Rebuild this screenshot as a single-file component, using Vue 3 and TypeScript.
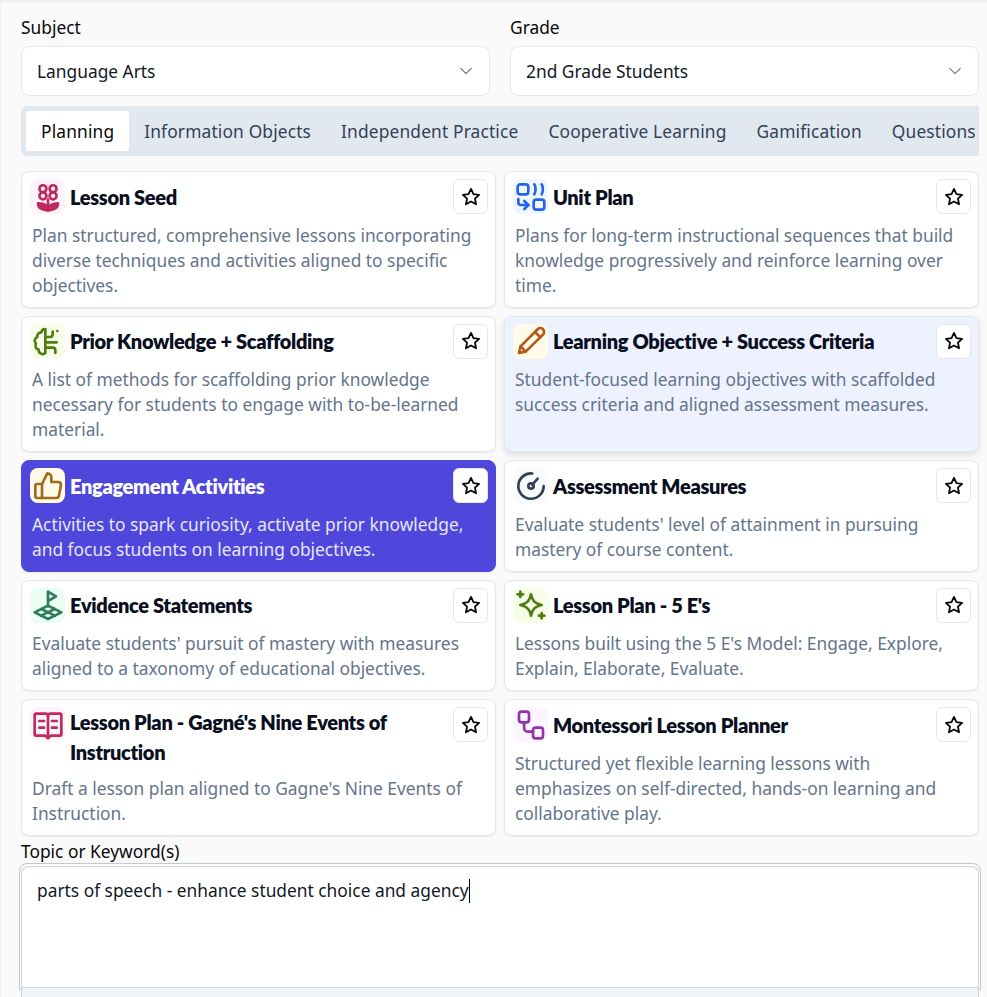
<template>
  <div class="page">
    <div class="top-row">
      <div class="field">
        <label class="label">Subject</label>
        <div class="select">
          <span>Language Arts</span>
          <svg class="chev" viewBox="0 0 24 24" fill="none" stroke="currentColor" stroke-width="1.5"><path d="M5 8.500l7 7 7-7" stroke-linecap="round" stroke-linejoin="round"/></svg>
        </div>
      </div>
      <div class="field">
        <label class="label">Grade</label>
        <div class="select">
          <span>2nd Grade Students</span>
          <svg class="chev" viewBox="0 0 24 24" fill="none" stroke="currentColor" stroke-width="1.5"><path d="M5 8.500l7 7 7-7" stroke-linecap="round" stroke-linejoin="round"/></svg>
        </div>
      </div>
    </div>

    <div class="tabs">
      <button v-for="(t, i) in tabs" :key="t" class="tab" :class="{ active: i === 0 }">{{ t }}</button>
    </div>

    <div class="grid">
      <div v-for="c in cards" :key="c.title" class="card" :class="c.state">
        <div class="card-head">
          <span class="icon" :class="c.icon">
            <svg viewBox="0 0 24 24" fill="none" stroke="currentColor" stroke-width="2" stroke-linecap="round" stroke-linejoin="round">
              <path v-for="d in icons[c.icon]" :key="d" :d="d" />
              <path v-for="d in solids[c.icon] || []" :key="d" :d="d" fill="currentColor" />
            </svg>
          </span>
          <h3 class="title">{{ c.title }}</h3>
          <button class="star">
            <svg viewBox="0 0 24 24" fill="none" stroke="currentColor" stroke-width="2" stroke-linejoin="round"><path d="M12 3.200l2.700 5.600 6.100.8-4.500 4.200 1.200 6.100-5.500-3-5.500 3 1.200-6.100-4.500-4.200 6.100-.8z"/></svg>
          </button>
        </div>
        <p class="desc">{{ c.desc }}</p>
      </div>
    </div>

    <label class="label topic-label">Topic or Keyword(s)</label>
    <div class="editor-ring">
      <div class="editor">
        <div class="editor-body"><span>parts of speech - enhance student choice and agency</span><i class="caret"></i></div>
        <div class="editor-foot"></div>
      </div>
    </div>
  </div>
</template>

<script setup lang="ts">
const tabs = ['Planning', 'Information Objects', 'Independent Practice', 'Cooperative Learning', 'Gamification', 'Questions']

const icons: Record<string, string[]> = {
  seed: [
    'M8.200 3.200a2.600 2.600 0 1 0 0 5.200 2.600 2.600 0 0 0 0-5.200z',
    'M15.800 3.200a2.600 2.600 0 1 0 0 5.200 2.600 2.600 0 0 0 0-5.200z',
    'M8.200 8.600a2.600 2.600 0 1 0 0 5.200 2.600 2.600 0 0 0 0-5.200z',
    'M15.800 8.600a2.600 2.600 0 1 0 0 5.200 2.600 2.600 0 0 0 0-5.200z',
    'M12 14v8',
  ],
  unit: [
    'M4 2.500h4a2 2 0 0 1 2 2v3.500a2 2 0 0 1-2 2H4a2 2 0 0 1-2-2V4.500a2 2 0 0 1 2-2z',
    'M14.500 2.500c1.200 1.800 1.200 5.700 0 7.500',
    'M20 2.500c1.200 1.800 1.200 5.700 0 7.500',
    'M16 14h4a2 2 0 0 1 2 2v3.500a2 2 0 0 1-2 2h-4a2 2 0 0 1-2-2V16a2 2 0 0 1 2-2z',
    'M2.500 13.500v2.500a2 2 0 0 0 2 2H10',
    'M7 15l3 3-3 3',
  ],
  brain: [
    'M10 3a3 3 0 0 0-3 2.500 3 3 0 0 0-3 3.500 3 3 0 0 0-1 5 3 3 0 0 0 2 4.500 3 3 0 0 0 5 2.500z',
    'M10 9h3.500a2 2 0 0 0 2-2V5',
    'M19 4.500h.01',
    'M10 13h8.500',
    'M10 17h5.500a2 2 0 0 1 2 2v2',
  ],
  pencil: [
    'M3 21l1.200-5L17 3.200a2.800 2.800 0 0 1 4 4L8 20z',
    'M15 5.200l4 4',
    'M4.200 16L8 20',
  ],
  thumb: [
    'M7.500 10.500H4a1.500 1.500 0 0 0-1.500 1.500v7.500A1.500 1.500 0 0 0 4 21h3.500z',
    'M7.500 10.500l4-8c1.800 0 3 1.300 3 3V9h5.200a2 2 0 0 1 2 2.400l-1.500 8A2 2 0 0 1 18.200 21H7.500',
  ],
  gauge: [
    'M13 2.600A9.500 9.500 0 1 0 21.500 12',
    'M13 11l4-4.500',
    'M12 10a2 2 0 1 0 0 4 2 2 0 0 0 0-4z',
  ],
  flag: [
    'M12 13V2l6 3.500-6 3.500',
    'M12 12.500l10 5-10 5-10-5z',
    'M7 15l10 5',
    'M17 15L7 20',
  ],
  spark: [
    'M12 4c1 5 3 7 8 8-5 1-7 3-8 8-1-5-3-7-8-8 5-1 7-3 8-8z',
    'M4 2v4',
    'M2 4h4',
    'M20 18v4',
    'M18 20h4',
  ],
  book: [
    'M3 3.500h7a2 2 0 0 1 2 2 2 2 0 0 1 2-2h7a1 1 0 0 1 1 1v14.500a1 1 0 0 1-1 1h-7l-2 2-2-2H3a1 1 0 0 1-1-1V4.500a1 1 0 0 1 1-1z',
    'M12 5.500V20',
    'M5.500 9H9',
    'M5.500 14H9',
    'M15 9h3.500',
    'M15 14h3.500',
  ],
  nodes: [
    'M5 2h3.500a2 2 0 0 1 2 2v4a2 2 0 0 1-2 2H5a2 2 0 0 1-2-2V4a2 2 0 0 1 2-2z',
    'M15.500 14H19a2 2 0 0 1 2 2v4a2 2 0 0 1-2 2h-3.500a2 2 0 0 1-2-2v-4a2 2 0 0 1 2-2z',
    'M6.800 10v4a3 3 0 0 0 3 3h3.700',
  ],
}

const solids: Record<string, string[]> = {
  seed: [
    'M12 22c-4.500 0-7.500-2-7.500-5.200 3.700 0 7.500 1.200 7.500 5.200z',
    'M12 22c4.500 0 7.500-2 7.500-5.200-3.700 0-7.500 1.200-7.500 5.200z',
  ],
}

const cards = [
  { title: 'Lesson Seed', icon: 'seed', state: '', desc: 'Plan structured, comprehensive lessons incorporating diverse techniques and activities aligned to specific objectives.' },
  { title: 'Unit Plan', icon: 'unit', state: '', desc: 'Plans for long-term instructional sequences that build knowledge progressively and reinforce learning over time.' },
  { title: 'Prior Knowledge + Scaffolding', icon: 'brain', state: '', desc: 'A list of methods for scaffolding prior knowledge necessary for students to engage with to-be-learned material.' },
  { title: 'Learning Objective + Success Criteria', icon: 'pencil', state: 'hover', desc: 'Student-focused learning objectives with scaffolded success criteria and aligned assessment measures.' },
  { title: 'Engagement Activities', icon: 'thumb', state: 'selected', desc: 'Activities to spark curiosity, activate prior knowledge, and focus students on learning objectives.' },
  { title: 'Assessment Measures', icon: 'gauge', state: '', desc: "Evaluate students' level of attainment in pursuing mastery of course content." },
  { title: 'Evidence Statements', icon: 'flag', state: '', desc: "Evaluate students' pursuit of mastery with measures aligned to a taxonomy of educational objectives." },
  { title: "Lesson Plan - 5 E's", icon: 'spark', state: '', desc: "Lessons built using the 5 E's Model: Engage, Explore, Explain, Elaborate, Evaluate." },
  { title: "Lesson Plan - Gagné's Nine Events of Instruction", icon: 'book', state: '', desc: "Draft a lesson plan aligned to Gagne's Nine Events of Instruction." },
  { title: 'Montessori Lesson Planner', icon: 'nodes', state: '', desc: 'Structured yet flexible learning lessons with emphasizes on self-directed, hands-on learning and collaborative play.' },
]
</script>

<style>
html, body {
  margin: 0;
  height: 997px;
  overflow: hidden;
  background: #fafafa;
}
</style>

<style scoped>
.page {
  height: 997px;
  box-sizing: border-box;
  overflow: hidden;
  padding: 14px 8px 0 20px;
  background: #fafafa;
  border-top: 3px solid #f0f0f0;
  border-left: 1px solid #f0f0f0;
  font-family: "Noto Sans", "Open Sans", sans-serif;
  color: #0a0a0a;
}

.top-row {
  display: grid;
  grid-template-columns: 1fr 1fr;
  gap: 20px;
}

.label {
  display: block;
  font-size: 17.35px;
  line-height: 20px;
}

.field .label {
  margin-bottom: 9px;
}

.select {
  height: 50px;
  box-sizing: border-box;
  display: flex;
  align-items: center;
  justify-content: space-between;
  padding: 0 14px 0 15px;
  background: #fff;
  border: 1px solid #e2e8f0;
  border-radius: 8px;
  font-size: 17.35px;
  color: #111827;
}

.chev {
  width: 18px;
  height: 18px;
  color: #6b7280;
}

.tabs {
  margin-top: 10px;
  height: 50px;
  box-sizing: border-box;
  display: flex;
  align-items: center;
  padding: 5px;
  background: #e2e8f0;
  border-radius: 6px 0 0 6px;
  overflow: hidden;
}

.tab {
  flex: none;
  height: 40px;
  padding: 0 15px;
  border: none;
  border-radius: 3px;
  background: transparent;
  font: inherit;
  font-size: 17.35px;
  letter-spacing: 0.15px;
  color: #334155;
}

.tab.active {
  background: #fff;
  color: #0a0a0a;
}

.grid {
  margin-top: 15px;
  display: grid;
  grid-template-columns: 1fr 1fr;
  gap: 8px;
}

.card {
  box-sizing: border-box;
  padding: 7px 7px 9px 8px;
  background: #fff;
  border: 1px solid #e2e8f0;
  border-radius: 8px;
  box-shadow: 0 1px 2px rgba(15, 23, 42, 0.06);
}

.card.hover {
  background: #eef2ff;
  box-shadow: 0 3px 6px rgba(15, 23, 42, 0.12);
}

.card.selected {
  background: #4f46dc;
  border-color: #4f46dc;
}

.card-head {
  display: flex;
  align-items: flex-start;
  gap: 5px;
}

.icon {
  flex: none;
  width: 35px;
  height: 35px;
  display: flex;
  align-items: center;
  justify-content: center;
  border-radius: 8px;
}

.icon svg {
  width: 32px;
  height: 32px;
}

.seed { background: #fdf2f8; color: #be2a5e; }
.unit { background: #eff6ff; color: #2563eb; }
.brain { background: #f7fee7; color: #4d7c0f; }
.pencil { background: #fffbeb; color: #b4591a; }
.thumb { background: #fffbeb; color: #a16a1a; }
.gauge { background: #f8fafc; color: #334155; }
.flag { background: #ecfdf5; color: #2f7d5a; }
.spark { background: #f7fee7; color: #4d7c0f; }
.book { background: #fdf2f8; color: #be2a5e; }
.nodes { background: #faf5ff; color: #9333aa; }

.title {
  flex: 1;
  min-height: 35px;
  margin: 0;
  display: flex;
  align-items: center;
  font-family: Lato, "Noto Sans", sans-serif;
  font-size: 20px;
  font-weight: 800;
  line-height: 30px;
  letter-spacing: -0.33px;
  color: #0a0f1f;
}

.selected .title {
  color: #fff;
}

.star {
  flex: none;
  width: 35px;
  height: 35px;
  margin-left: 4px;
  padding: 0;
  display: flex;
  align-items: center;
  justify-content: center;
  background: #fff;
  border: 1px solid #e2e8f0;
  border-radius: 6px;
  color: #0a0a0a;
}

.star svg {
  width: 22px;
  height: 22px;
}

.desc {
  margin: 8.5px 6px 0 2px;
  font-size: 17.35px;
  line-height: 25px;
  color: #64748b;
}

.selected .desc {
  color: #e5e7fb;
}

.topic-label {
  margin-top: 5.5px;
}

.editor-ring {
  margin: 2px -2px 0;
  height: 127px;
  box-sizing: border-box;
  border: 1px solid #c4c8d0;
  border-radius: 8px 8px 0 0;
  padding: 2px 1px 0;
}

.editor {
  height: 131px;
  box-sizing: border-box;
  border: 1px solid #cbd5e1;
  border-bottom: none;
  border-radius: 8px 8px 0 0;
  background: #fff;
  position: relative;
}

.editor-body {
  height: 121px;
  box-sizing: border-box;
  padding: 11px 15px 0;
  border-bottom: 1px solid #cbd5e1;
  font-size: 17.35px;
  line-height: 24px;
  color: #111827;
}

.caret {
  display: inline-block;
  width: 1px;
  height: 24px;
  vertical-align: -6px;
  background: #000;
}

.editor-foot {
  height: 10px;
  background: #f1f5f9;
}
</style>
